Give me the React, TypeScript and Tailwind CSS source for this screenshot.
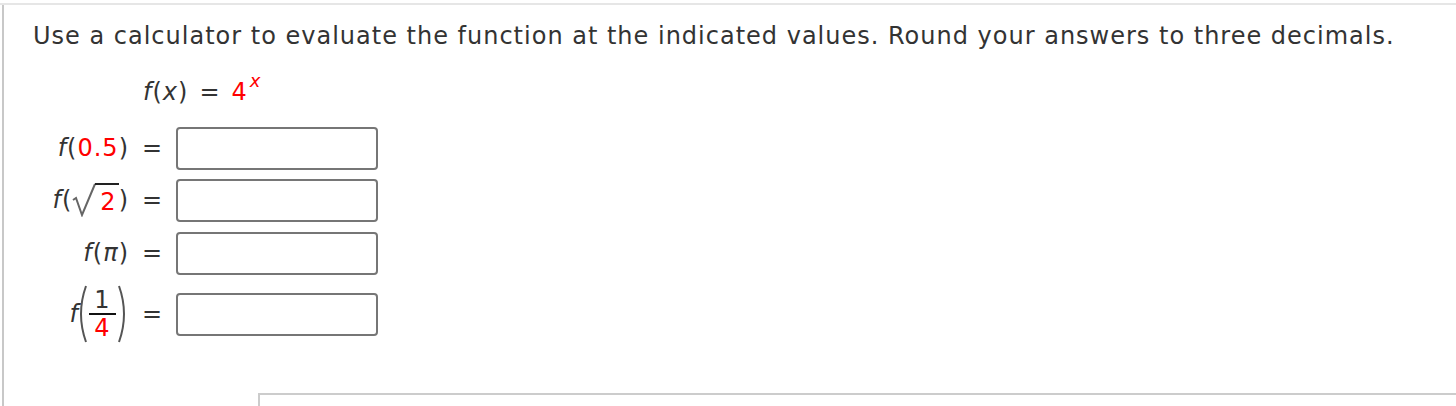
import React from 'react';

const FONT = { fontFamily: '"DejaVu Sans", Verdana, sans-serif' };

const AnswerBox: React.FC = () => (
    <div className="w-[202px] h-[43px] rounded-[4px] border-2 border-[#767676] bg-white" />
);

/* tall parenthesis drawn as a stroke */
const BigParen: React.FC<{ side: 'l' | 'r' }> = ({ side }) => (
    <svg width="12" height="58" viewBox="0 0 12 58" className="shrink-0">
        <path
            d={side === 'l' ? 'M10 1 Q0 29 10 57' : 'M2 1 Q12 29 2 57'}
            fill="none"
            stroke="#555"
            strokeWidth="2"
        />
    </svg>
);

/* radical sign, drawn */
const Radical: React.FC = () => (
    <svg width="24" height="34" viewBox="0 0 24 34" className="shrink-0">
        <path d="M1 17 L4 15 L10 32 L23 1" fill="none" stroke="#666" strokeWidth="2" />
    </svg>
);

const rows: { label: React.ReactNode; h: string }[] = [
    {
        label: (
            <span>
                <i>f</i>(<span className="text-[#f00]">0.5</span>)
            </span>
        ),
        h: 'h-[56px]',
    },
    {
        label: (
            <span className="inline-flex items-center">
                <i>f</i>
                <span>(</span>
                <Radical />
                <span className="h-[34px] leading-[34px] border-t-2 border-[#222] pl-[5px] pr-[2px] -ml-[1px] text-[#f00]">2</span>
                <span>)</span>
            </span>
        ),
        h: 'h-[48px]',
    },
    {
        label: (
            <span>
                <i>f</i>(<i>π</i>)
            </span>
        ),
        h: 'h-[58px]',
    },
    {
        label: (
            <span className="inline-flex items-center">
                <i className="mr-[-3px]">f</i>
                <BigParen side="l" />
                <span className="flex flex-col items-center mx-[1px] text-[24px] leading-[22px]">
                    <span className="text-[#333]">1</span>
                    <span className="w-[27px] h-[2px] bg-[#111] my-[2px]" />
                    <span className="text-[#f00]">4</span>
                </span>
                <BigParen side="r" />
            </span>
        ),
        h: 'h-[64px]',
    },
];

export default function App() {
    return (
        <div className="w-[1456px] h-[406px] bg-white overflow-hidden text-[#333] tracking-[1px]" style={FONT}>
            <div className="h-[3px]" />
            <div className="h-[2px] bg-[#e6e6e6]" />
            <div className="ml-[2px] h-[401px] border-l-2 border-[#c8c8c8] flex flex-col">
                <p className="pl-[29px] pt-[15px] text-[24px] leading-[32px]">
                    Use a calculator to evaluate the function at the indicated values. Round your answers to three decimals.
                </p>

                <div className="pl-[139px] mt-[24px] text-[24px] leading-[32px] flex items-baseline">
                    <span>
                        <i>f</i>(<i>x</i>)
                    </span>
                    <span className="ml-[11px]">=</span>
                    <span className="ml-[11px] text-[#f00]">4</span>
                    <i className="text-[#f00] text-[18px] relative -top-[13px] ml-[2px]">x</i>
                </div>

                <div className="mt-[10px] grid grid-cols-[125px_47px_auto] text-[24px]">
                    {rows.map((r, i) => (
                        <React.Fragment key={i}>
                            <div className={`${r.h} flex items-center justify-end`}>{r.label}</div>
                            <div className={`${r.h} flex items-center pl-[13px]`}>
                                <span>=</span>
                            </div>
                            <div className={`${r.h} flex items-center`}>
                                <AnswerBox />
                            </div>
                        </React.Fragment>
                    ))}
                </div>

                <div className="mt-auto ml-[254px] h-[13px] border-t-2 border-l-2 border-[#cccccc]" />
            </div>
        </div>
    );
}
